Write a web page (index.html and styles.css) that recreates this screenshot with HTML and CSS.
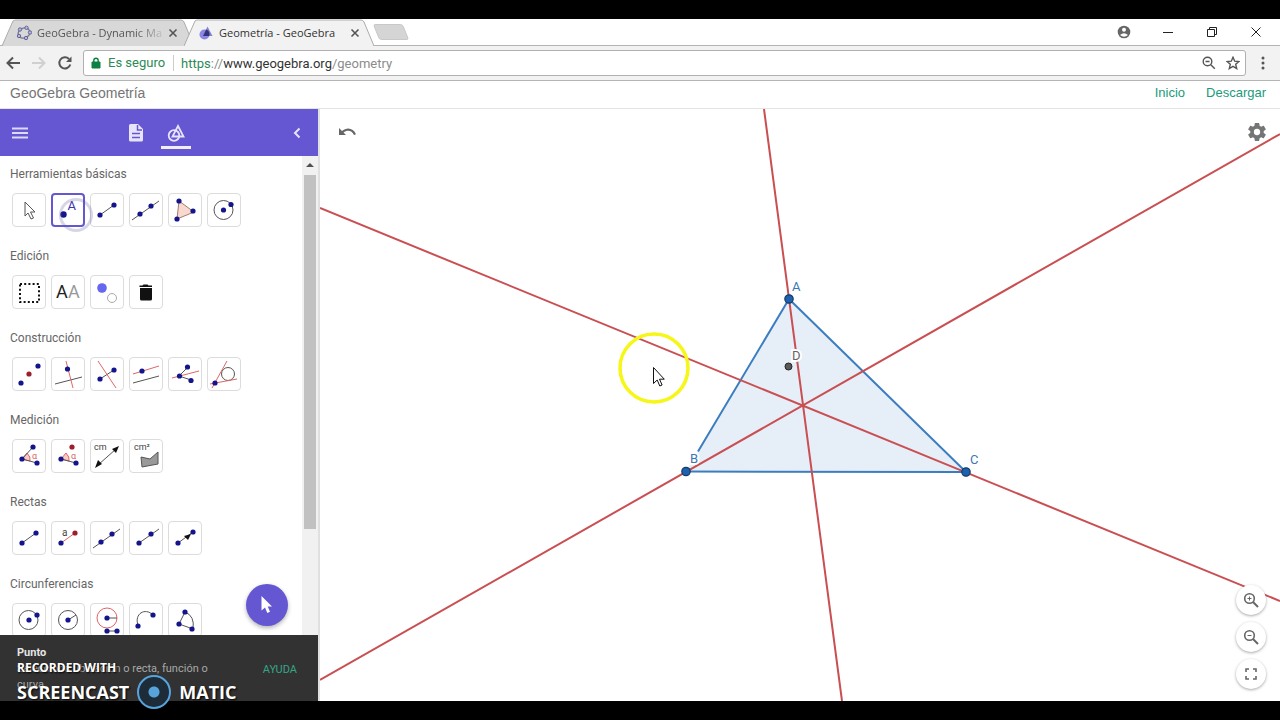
FILE: index.html
```html
<!DOCTYPE html>
<html lang="es">

<head>
  <meta charset="UTF-8" />
  <meta name="viewport" content="width=device-width, initial-scale=1.0" />
  <title>Geometría - GeoGebra</title>
  <link rel="stylesheet" href="styles.css">
</head>

<body>
  <div class="window">
    <div class="tab-bar">
      <div class="tab">
        <svg class="tab-shape" viewBox="0 0 190 27" preserveAspectRatio="none"><path d="M0 27 L11 2 Q12 1 14 1 H179 Q181 1 182 3 L192 27" /></svg>
        <svg class="favicon" viewBox="0 0 16 16">
          <ellipse cx="8" cy="8" rx="6" ry="5" transform="rotate(-20 8 8)" fill="none" stroke="#77779a" stroke-width="1.3" />
          <g fill="#b5b5e8" stroke="#66668c"><circle cx="4" cy="4.5" r="1.7" /><circle cx="10.5" cy="2.8" r="1.7" /><circle cx="14" cy="7.5" r="1.7" /><circle cx="10" cy="13" r="1.7" /><circle cx="3" cy="11" r="1.7" /></g>
        </svg>
        <span class="tab-title faded">GeoGebra - Dynamic Ma</span>
        <button class="tab-close" aria-label="Cerrar"><svg viewBox="0 0 10 10"><path d="M1.5 1.5 8.5 8.5M8.5 1.5 1.5 8.5" /></svg></button>
      </div>
      <div class="tab current">
        <svg class="tab-shape" viewBox="0 0 190 27" preserveAspectRatio="none"><path d="M0 27 L11 2 Q12 1 14 1 H177 Q179 1 180 3 L190 27" /></svg>
        <svg class="favicon" viewBox="0 0 16 16">
          <path d="M9.5 1.5 14.5 11H5z" fill="#8585c4" />
          <circle cx="6.5" cy="9.5" r="5" fill="#8c86e6" />
          <path d="M8.2 4.5A5 5 0 0 1 11.2 11H5z" fill="#33337c" />
        </svg>
        <span class="tab-title">Geometría - GeoGebra</span>
        <button class="tab-close" aria-label="Cerrar"><svg viewBox="0 0 10 10"><path d="M1.5 1.5 8.5 8.5M8.5 1.5 1.5 8.5" /></svg></button>
      </div>
      <button class="new-tab" aria-label="Nueva pestaña"></button>
      <div class="window-controls">
        <button aria-label="Perfil"><svg viewBox="0 0 14 14"><circle cx="7" cy="7" r="6.3" fill="#666" /><circle cx="7" cy="4.8" r="2" fill="#fff" /><path d="M3 10q4-3.5 8 0-4 3.6-8 0" fill="#fff" /></svg></button>
        <button aria-label="Minimizar"><svg viewBox="0 0 14 14"><path d="M2 7.5h10" /></svg></button>
        <button aria-label="Restaurar"><svg viewBox="0 0 14 14"><path d="M2.5 4.5h7v7h-7zM4.5 4.5v-2h7v7h-2" /></svg></button>
        <button aria-label="Cerrar ventana"><svg viewBox="0 0 14 14"><path d="M2.5 2.5l9 9M11.5 2.5l-9 9" /></svg></button>
      </div>
    </div>

    <div class="toolbar">
      <button class="nav-btn" aria-label="Atrás"><svg viewBox="0 0 16 16"><path d="M15 8H3M8 2.5 2.5 8 8 13.5" /></svg></button>
      <button class="nav-btn off" aria-label="Adelante"><svg viewBox="0 0 16 16"><path d="M1 8h12M8 2.5 13.5 8 8 13.5" /></svg></button>
      <button class="nav-btn" aria-label="Recargar"><svg viewBox="0 0 16 16"><path d="M13.3 9.5A5.6 5.6 0 1 1 12 4" /><path d="M14.5 1.5v5.5H9z" fill="#555" stroke="none" /></svg></button>
      <div class="address">
        <svg class="lock" viewBox="0 0 10 12"><path d="M1 5h8v6H1z" fill="#0b8043" stroke="#0b8043" /><path d="M2.8 5V3.5a2.2 2.2 0 0 1 4.4 0V5" fill="none" stroke="#0b8043" stroke-width="1.4" /></svg>
        <span class="secure">Es seguro</span>
        <span class="url"><span class="scheme">https</span><span class="dim">://</span>www.geogebra.org<span class="dim">/geometry</span></span>
        <button class="address-btn" aria-label="Zoom"><svg viewBox="0 0 14 14"><circle cx="5.5" cy="5.5" r="4.3" /><path d="M3.5 5.5h4M8.8 8.8l4 4" /></svg></button>
        <button class="address-btn" aria-label="Favorito"><svg viewBox="0 0 14 14"><path d="M7 1.3l1.7 3.9 4.2.3-3.2 2.8 1 4.2L7 10.3l-3.7 2.2 1-4.2L1.1 5.5l4.2-.3z" /></svg></button>
      </div>
      <button class="menu-btn" aria-label="Menú"><svg viewBox="0 0 4 14"><circle cx="2" cy="2" r="1.5" /><circle cx="2" cy="7" r="1.5" /><circle cx="2" cy="12" r="1.5" /></svg></button>
    </div>

    <header class="app-header">
      <span class="app-name">GeoGebra Geometría</span>
      <nav>
        <a href="#">Inicio</a>
        <a href="#">Descargar</a>
      </nav>
    </header>

    <main>
      <aside class="sidebar">
        <div class="side-header">
          <button aria-label="Menú principal"><svg width="16" height="12" viewBox="0 0 16 12"><path d="M0 1.5h16M0 6h16M0 10.5h16" stroke="#ddd9f6" stroke-width="1.8" /></svg></button>
          <div class="side-tabs">
            <button aria-label="Álgebra"><svg width="16" height="20" viewBox="0 0 16 20"><path d="M2.5 1H10l5 5v11a1.5 1.5 0 0 1-1.5 1.5h-11A1.5 1.5 0 0 1 1 17V2.5A1.5 1.5 0 0 1 2.5 1z" fill="#e6e3fa" /><path d="M9.5 2v5H14M4 10.5h8M4 14.5h8" fill="none" stroke="#6557d2" stroke-width="1.5" /></svg></button>
            <button class="selected" aria-label="Herramientas"><svg width="18" height="18" viewBox="0 0 18 18" fill="none" stroke="#e6e3fa" stroke-width="1.8"><circle cx="7" cy="11.5" r="5.3" /><path d="M11 2 16.5 12.5H5.5z" /></svg></button>
          </div>
          <button aria-label="Ocultar"><svg width="8" height="12" viewBox="0 0 8 12"><path d="M6.5 1.5 2 6l4.5 4.5" fill="none" stroke="#e6e3fa" stroke-width="2" /></svg></button>
        </div>

        <div class="side-body">
          <div class="tool-list" id="tool-list"></div>
          <div class="scrollbar">
            <div class="scroll-arrow"></div>
            <div class="scroll-thumb"></div>
          </div>
        </div>

        <button class="move-btn" aria-label="Mover"><svg width="14" height="20" viewBox="0 0 14 20"><path d="M1.5 1v14.5l3.5-3 2.3 5.5 2.7-1.2-2.3-5.3H12z" fill="#fff" /></svg></button>
        <div class="click-ring"></div>

        <div class="toast">
          <div class="toast-text">
            <strong>Punto</strong>
            <p>Selecciona ubicación o recta, función o curva</p>
          </div>
          <button class="help-btn">AYUDA</button>
        </div>
      </aside>

      <section class="canvas">
        <svg class="drawing" viewBox="320 109 960 592" preserveAspectRatio="xMidYMid slice">
          <path d="M789 299 686 471.5 966 472z" fill="#e6eef8" />
          <path class="blue-line" d="M789 299 698 451.5M686 471.5 966 472 789 299" />
          <path class="red-line" d="M764 109 842 701M320 208 1280 601M320 680 1280 134" />
          <g class="vertex"><circle cx="789" cy="299" r="4.2" /><circle cx="686" cy="471.5" r="4.2" /><circle cx="966" cy="472" r="4.2" /></g>
          <circle cx="788.5" cy="366.5" r="3.5" fill="#5a5a5a" stroke="#222" />
          <g class="point-name">
            <text x="792" y="291">A</text>
            <text x="690" y="463">B</text>
            <text x="970" y="464">C</text>
            <text x="792" y="360" class="free">D</text>
          </g>
          <circle cx="654" cy="368" r="34" fill="none" stroke="#f6f618" stroke-width="3.5" />
          <path d="M653.5 367.5v16l3.7-3.5 2.6 6 2.3-1-2.6-5.8h4.8z" fill="#fff" stroke="#111" />
        </svg>
        <button class="undo-btn" aria-label="Deshacer"><svg width="18" height="12" viewBox="0 0 18 12"><path d="M0 2v7h7L4.5 6.5C8 3.5 13 4 15 9l2-.7C14.5 2 8 .5 3 5z" fill="#666" /></svg></button>
        <button class="settings-btn" aria-label="Ajustes"><svg width="18" height="18" viewBox="2 2 20 20"><path fill="#757575" d="M19.43 12.98c.04-.32.07-.64.07-.98s-.03-.66-.07-.98l2.11-1.65c.19-.15.24-.42.12-.64l-2-3.46c-.12-.22-.39-.3-.61-.22l-2.49 1c-.52-.4-1.08-.73-1.69-.98l-.38-2.65C14.46 2.18 14.25 2 14 2h-4c-.25 0-.46.18-.49.42l-.38 2.65c-.61.25-1.17.59-1.69.98l-2.49-1c-.23-.09-.49 0-.61.22l-2 3.46c-.13.22-.07.49.12.64l2.11 1.65c-.04.32-.07.65-.07.98s.03.66.07.98l-2.11 1.65c-.19.15-.24.42-.12.64l2 3.46c.12.22.39.3.61.22l2.49-1c.52.4 1.08.73 1.69.98l.38 2.65c.03.24.24.42.49.42h4c.25 0 .46-.18.49-.42l.38-2.65c.61-.25 1.17-.59 1.69-.98l2.49 1c.23.09.49 0 .61-.22l2-3.46c.12-.22.07-.49-.12-.64zM12 15.5a3.5 3.5 0 1 1 0-7 3.5 3.5 0 0 1 0 7z" /></svg></button>
        <div class="zoom-buttons">
          <button aria-label="Acercar"><svg viewBox="0 0 16 16"><circle cx="6.5" cy="6.5" r="4.8" /><path d="M4.5 6.5h4M6.5 4.5v4" stroke-width="1" /><path d="M10 10l5 5" stroke-width="2" /></svg></button>
          <button aria-label="Alejar"><svg viewBox="0 0 16 16"><circle cx="6.5" cy="6.5" r="4.8" /><path d="M4.5 6.5h4" stroke-width="1" /><path d="M10 10l5 5" stroke-width="2" /></svg></button>
          <button aria-label="Pantalla completa"><svg viewBox="0 0 16 16"><path d="M3 6V3h3M10 3h3v3M13 10v3h-3M6 13H3v-3" /></svg></button>
        </div>
      </section>
    </main>

    <div class="watermark">
      <div class="recorded">RECORDED WITH</div>
      <div class="brand"><span>SCREENCAST</span><i></i><span>MATIC</span></div>
    </div>
  </div>

  <script src="tools.js"></script>
</body>

</html>
```

FILE: styles.css
```css
:root {
  --purple: #6557d2;
  --green: #1b9a7c;
  --grey: #666666;
}

* {
  box-sizing: border-box;
}

body {
  margin: 0;
  height: 100vh;
  padding: 19px 0;
  background: #000;
  font-family: Roboto, sans-serif;
  overflow: hidden;
}

button {
  display: flex;
  align-items: center;
  justify-content: center;
  padding: 0;
  border: none;
  background: none;
  cursor: pointer;
}

.window {
  position: relative;
  height: 100%;
  display: flex;
  flex-direction: column;
  background: #fff;
}

/* browser tabs */
.tab-bar {
  display: flex;
  height: 27px;
  border-bottom: 1px solid #b4b4b4;
  padding-left: 2px;
}

.tab {
  position: relative;
  display: flex;
  align-items: center;
  width: 190px;
  height: 27px;
  padding: 0 14px;
  font: 11px "Open Sans", sans-serif;
  color: #555;
}

.tab.current {
  z-index: 1;
  color: #333;
  padding: 0 22px 0 6px;
}

.tab.current .tab-shape {
  left: -8px;
}

.tab-shape {
  position: absolute;
  left: 0;
  top: 0;
  width: 100%;
  height: 27px;
  fill: #d8d8d8;
  stroke: #ababab;
}

.current .tab-shape {
  fill: #f2f2f2;
}

.favicon {
  position: relative;
  width: 16px;
  height: 16px;
  margin-right: 5px;
}

.tab-title {
  position: relative;
  flex: 1;
  white-space: nowrap;
}

.faded {
  -webkit-mask-image: linear-gradient(to right, #000 75%, transparent);
  mask-image: linear-gradient(to right, #000 75%, transparent);
}

.tab-close {
  position: relative;
}

.tab-close svg {
  width: 10px;
  height: 10px;
  stroke: #555;
  stroke-width: 1.6;
}

.new-tab {
  align-self: center;
  width: 30px;
  height: 16px;
  margin-left: -6px;
  background: #d5d5d5;
  border: 1px solid #c8c8c8;
  border-radius: 3px;
  transform: skewX(22deg);
}

.window-controls {
  display: flex;
  margin-left: auto;
  gap: 8px;
  padding-right: 6px;
}

.window-controls button {
  width: 36px;
}

.window-controls svg {
  width: 14px;
  height: 14px;
  fill: none;
  stroke: #222;
}

.window-controls button:first-child svg {
  stroke: none;
}

/* address bar */
.toolbar {
  display: flex;
  align-items: center;
  height: 35px;
  padding: 0 8px 0 5px;
  background: #f2f2f2;
  border-bottom: 1px solid #b4b4b4;
}

.nav-btn {
  width: 16px;
  margin-right: 10px;
}

.nav-btn svg {
  width: 16px;
  height: 16px;
  fill: none;
  stroke: #555;
  stroke-width: 2;
}

.nav-btn.off svg {
  stroke: #d0d0d0;
}

.address {
  flex: 1;
  display: flex;
  align-items: center;
  height: 26px;
  padding: 0 5px 0 7px;
  background: #fff;
  border: 1px solid #b0b0b0;
  border-radius: 3px;
  font-size: 13px;
}

.lock {
  width: 10px;
  height: 12px;
}

.secure {
  margin-left: 7px;
  padding-right: 8px;
  color: #2c8a55;
  border-right: 1px solid #ccc;
  line-height: 16px;
}

.url {
  flex: 1;
  margin-left: 7px;
  color: #333;
}

.scheme {
  color: #2c8a55;
}

.dim {
  color: #8c8c8c;
}

.address-btn {
  width: 14px;
  margin-left: 10px;
}

.address-btn svg {
  width: 14px;
  height: 14px;
  fill: none;
  stroke: #555;
  stroke-width: 1.4;
}

.menu-btn {
  width: 18px;
  margin-left: 8px;
}

.menu-btn svg {
  width: 4px;
  height: 14px;
  fill: #555;
}

/* app header */
.app-header {
  display: flex;
  align-items: center;
  justify-content: space-between;
  height: 28px;
  padding: 0 14px 4px 10px;
  border-bottom: 1px solid #e4e4e4;
  font: 14px "Liberation Sans", Arial, sans-serif;
  color: #757575;
}

.app-header nav {
  display: flex;
  gap: 21px;
  font-size: 13px;
}

.app-header a {
  color: var(--green);
  text-decoration: none;
}

main {
  flex: 1;
  display: flex;
  min-height: 0;
}

/* sidebar */
.sidebar {
  position: relative;
  display: flex;
  flex-direction: column;
  width: 320px;
  border-right: 2px solid #e0e0e0;
}

.side-header {
  display: flex;
  align-items: center;
  justify-content: space-between;
  height: 47px;
  padding: 0 17px 0 12px;
  background: var(--purple);
}

.side-tabs {
  display: flex;
  gap: 10px;
  margin-right: 9px;
}

.side-tabs button {
  width: 30px;
  height: 32px;
  border-top: 3px solid transparent;
  border-bottom: 3px solid transparent;
}

.side-tabs .selected {
  border-bottom-color: #f0eefc;
}

.side-body {
  flex: 1;
  display: flex;
  min-height: 0;
}

.tool-list {
  flex: 1;
  padding-top: 8px;
  overflow: hidden;
}

.tool-group {
  margin-bottom: 19px;
}

.tool-group h2 {
  margin: 0 0 9px 10px;
  font-size: 12px;
  font-weight: normal;
  line-height: 20px;
  color: var(--grey);
}

.tools {
  display: flex;
  gap: 5px;
  padding-left: 12px;
}

.tool {
  width: 34px;
  height: 34px;
  background: #fff;
  border: 1px solid #dcdcdc;
  border-radius: 4px;
}

.tool.selected {
  border: 2px solid var(--purple);
}

.tool svg {
  flex: none;
  width: 32px;
  height: 32px;
  fill: none;
  stroke: #555;
}

.tool .red {
  stroke: #e06666;
}

.tool .pt {
  fill: #14148c;
  stroke: none;
}

.tool .rpt {
  fill: #9c1f2b;
  stroke: none;
}

.tool text {
  fill: #444;
  stroke: none;
  font-family: Roboto, sans-serif;
}

.scrollbar {
  display: flex;
  flex-direction: column;
  align-items: center;
  width: 16px;
  background: #f1f1f1;
}

.scroll-arrow {
  margin: 7px 0 8px;
  border: 4px solid transparent;
  border-top: none;
  border-bottom-color: #505050;
}

.scroll-thumb {
  width: 12px;
  height: 65%;
  background: #c1c1c1;
}

.move-btn {
  position: absolute;
  right: 30px;
  bottom: 75px;
  width: 42px;
  height: 42px;
  border-radius: 50%;
  background: var(--purple);
  box-shadow: 0 2px 4px rgba(0, 0, 0, 0.3);
}

.click-ring {
  position: absolute;
  left: 59px;
  top: 89px;
  width: 34px;
  height: 34px;
  border: 3px solid rgba(90, 90, 160, 0.25);
  border-radius: 50%;
}

.toast {
  position: absolute;
  left: 0;
  right: 0;
  bottom: 0;
  display: flex;
  justify-content: space-between;
  align-items: center;
  height: 66px;
  padding: 10px 21px 8px 17px;
  background: #323232;
  overflow: hidden;
  font-size: 11px;
  line-height: 16px;
  color: #a8a8a8;
}

.toast-text {
  width: 210px;
}

.toast strong {
  color: #e6e6e6;
}

.toast p {
  margin: 0;
}

.help-btn {
  font: 11px Roboto, sans-serif;
  color: #35a587;
}

/* drawing area */
.canvas {
  position: relative;
  flex: 1;
  min-width: 0;
}

.drawing {
  display: block;
  width: 100%;
  height: 100%;
}

.red-line {
  fill: none;
  stroke: #c94f52;
  stroke-width: 2;
}

.blue-line {
  fill: none;
  stroke: #3c7dc0;
  stroke-width: 2;
}

.vertex {
  fill: #1d62b0;
  stroke: #163a66;
  stroke-width: 1.2;
}

.point-name {
  font: 13px Roboto, sans-serif;
  fill: #3a78b5;
  stroke: #fff;
  stroke-width: 4px;
  paint-order: stroke;
}

.point-name .free {
  fill: #666;
}

.undo-btn {
  position: absolute;
  left: 19px;
  top: 17px;
}

.settings-btn {
  position: absolute;
  right: 14px;
  top: 14px;
}

.zoom-buttons {
  position: absolute;
  right: 14px;
  bottom: 12px;
  display: flex;
  flex-direction: column;
  gap: 7px;
}

.zoom-buttons button {
  width: 30px;
  height: 30px;
  border-radius: 50%;
  background: #fff;
  box-shadow: 0 1px 3px rgba(0, 0, 0, 0.35);
}

.zoom-buttons svg {
  width: 16px;
  height: 16px;
  fill: none;
  stroke: #666;
  stroke-width: 1.6;
}

/* recorder mark */
.watermark {
  position: absolute;
  left: 17px;
  bottom: -8px;
  color: #fff;
  font-family: "Open Sans", sans-serif;
  font-weight: bold;
  text-shadow: 1px 1px 2px #000;
}

.recorded {
  font-size: 12px;
  line-height: 14px;
}

.brand {
  display: flex;
  align-items: center;
  gap: 8px;
  font-size: 18px;
}

.brand i {
  width: 34px;
  height: 34px;
  border: 2px solid #57a3dc;
  border-radius: 50%;
  background: radial-gradient(circle, #57a3dc 5px, #1d2c38 6px);
}
```

FILE: tools.js
```js
const p = (x, y) => `<circle class="pt" cx="${x}" cy="${y}" r="2.6" />`;
const r = (x, y) => `<circle class="rpt" cx="${x}" cy="${y}" r="2.6" />`;
const l = (d) => `<path d="${d}" />`;
const red = (d) => `<path class="red" d="${d}" />`;

const groups = [
  ['Herramientas básicas', [
    ['Mueve', '<path d="M12 8v14l3-3 3 6 2.5-1-3-6H22z" />'],
    ['Punto', '<circle class="pt" cx="11.5" cy="20.5" r="3.2" /><text x="15.5" y="16" font-size="13" style="fill:#3d36b0">A</text>'],
    ['Segmento', l('M9 21 23 11') + p(9, 21) + p(23, 11)],
    ['Recta', l('M2 26 29 7') + p(10, 20) + p(21, 12)],
    ['Polígono', '<path d="M10 7 25 18 8 25z" fill="#f7d9cf" stroke="#a67c6c" />' + p(10, 7) + p(24, 17) + p(8, 25)],
    ['Circunferencia', '<circle cx="15.5" cy="16" r="9.5" />' + p(15.5, 16) + p(23, 10.5)]
  ]],
  ['Edición', [
    ['Selecciona', '<path d="M7 8h19v18H7z" stroke="#111" stroke-width="2" stroke-dasharray="2 2.2" />'],
    ['Rótulo', '<text x="4" y="22" font-size="18" style="fill:#222">A</text><text x="16" y="22" font-size="18" style="fill:#999">A</text>'],
    ['Mostrar', '<circle cx="11" cy="12" r="4.8" fill="#6666ee" stroke="none" /><circle cx="21" cy="22" r="4.5" stroke="#aaa" />'],
    ['Borra', '<path d="M10 12h12v11q0 1.5-1.5 1.5h-9Q10 24.5 10 23zM9.5 9.5h3l1-1h4l1 1h3.5v1.5H9.5z" fill="#111" stroke="none" />']
  ]],
  ['Construcción', [
    ['Medio', p(8, 25) + r(16, 16) + p(25, 8)],
    ['Perpendicular', l('M3 26 30 19') + red('M14 3 21 30') + p(15.5, 11)],
    ['Mediatriz', l('M9 21 23 12') + red('M7 3 25 30') + p(9, 21) + p(23, 12)],
    ['Paralela', l('M3 25 29 18') + red('M3 16 29 8') + p(12, 13)],
    ['Bisectriz', l('M10 18 19 9M10 18 22 22') + red('M3 20 30 13') + p(10.5, 18) + p(18.5, 9) + p(22, 22.5)],
    ['Tangentes', '<circle cx="20" cy="16" r="6.5" />' + red('M4 30 19 3M2 26 29 21') + p(7, 25)]
  ]],
  ['Medición', [
    ['Ángulo', '<path class="red" d="M9 19 14 13Q18 17 17 21z" fill="#f9c9c9" />' + l('M20 7 9 19 24 23') + p(20, 7) + p(9, 19) + p(24, 23) + '<text x="19" y="19" font-size="9" style="fill:#d66">α</text>'],
    ['Ángulo dada su amplitud', '<path class="red" d="M9 19 14 13Q18 17 17 21z" fill="#f9c9c9" />' + l('M9 19 24 23') + r(20, 7) + p(9, 19) + p(24, 23) + '<text x="19" y="19" font-size="9" style="fill:#d66">α</text>'],
    ['Distancia', l('M7 25 25 9') + '<path d="M28 6 25 13 21 9zM4 28 7 20 11 24z" fill="#111" stroke="none" /><text x="3" y="10" font-size="9">cm</text>'],
    ['Área', '<path d="M11 17 20 19 28 12V24L12 27z" fill="#999" /><text x="4" y="10" font-size="9">cm²</text>']
  ]],
  ['Rectas', [
    ['Segmento', l('M9 21 23 11') + p(9, 21) + p(23, 11)],
    ['Segmento de longitud dada', red('M9 21 23 11') + p(9, 21) + r(23, 11) + '<text x="10" y="14" font-size="10">a</text>'],
    ['Recta', l('M2 26 29 7') + p(10, 20) + p(21, 12)],
    ['Semirrecta', l('M9 21 29 7') + p(9, 21) + p(21, 12)],
    ['Vector', l('M9 21 24 10') + '<path d="M22 12 19 18 15 14z" fill="#111" stroke="none" />' + p(9, 21) + p(24, 10)]
  ]],
  ['Circunferencias', [
    ['Circunferencia', '<circle cx="15.5" cy="16" r="9.5" />' + p(16, 16) + p(24, 11)],
    ['Centro y radio', '<circle cx="16" cy="16" r="9.5" />' + l('M16 16 24 11') + p(16, 16)],
    ['Compás', '<circle class="red" cx="16" cy="14" r="10" />' + l('M16 14h10M16 27h10') + p(16, 14) + p(16, 27) + p(26, 27)],
    ['Semicircunferencia', l('M8 21C4 10 15 3 23 11') + p(8, 22) + p(23, 11)],
    ['Sector', l('M10 20 16 8Q26 12 24 25z') + p(16, 8) + p(10, 20) + p(23, 25)]
  ]]
];

const toolList = document.getElementById('tool-list');

groups.forEach(([title, tools]) => {
  const group = document.createElement('div');
  group.className = 'tool-group';
  group.innerHTML = `
    <h2>${title}</h2>
    <div class="tools">
      ${tools.map(([name, icon]) => `<button class="tool ${name === 'Punto' ? 'selected' : ''}" aria-label="${name}"><svg viewBox="0 0 32 32">${icon}</svg></button>`).join('')}
    </div>
  `;
  toolList.appendChild(group);
});

toolList.addEventListener('click', (e) => {
  const tool = e.target.closest('.tool');
  if (!tool) return;
  document.querySelectorAll('.tool').forEach(el => el.classList.remove('selected'));
  tool.classList.add('selected');
});
```
